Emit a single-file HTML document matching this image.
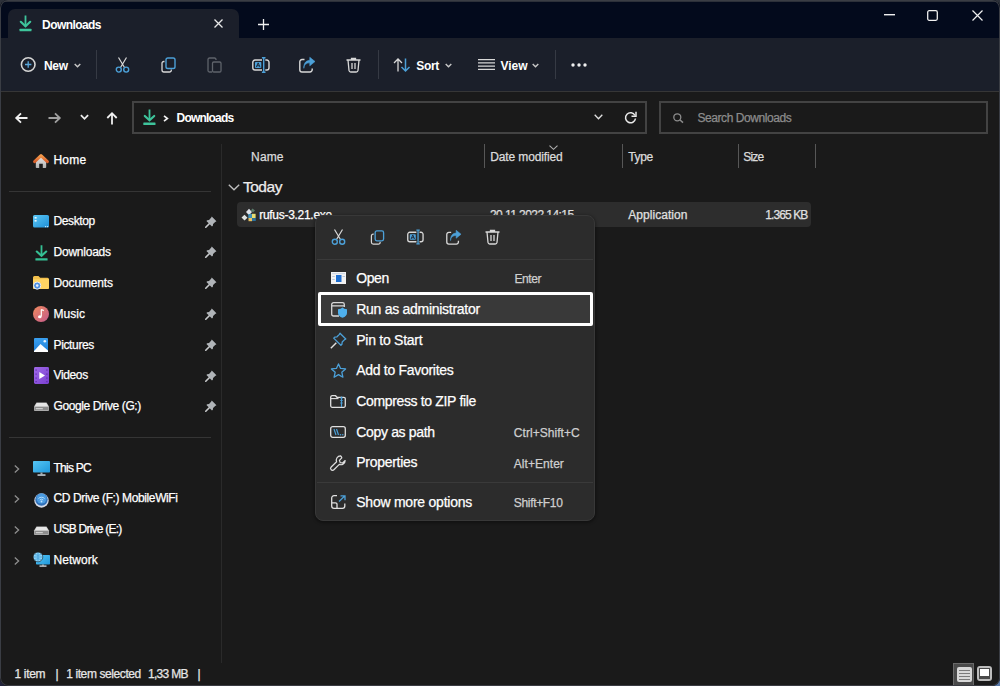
<!DOCTYPE html>
<html><head><meta charset="utf-8">
<style>
html,body{margin:0;padding:0;}
body{width:1000px;height:686px;overflow:hidden;background:#2c3039;position:relative;font-family:"Liberation Sans",sans-serif;}
.win{position:absolute;left:0;top:0;width:1000px;height:686px;border-radius:8px;background:#1a1a1a;overflow:hidden;}
.abs{position:absolute;}
.t{position:absolute;line-height:1;white-space:nowrap;font-family:"Liberation Sans",sans-serif;-webkit-text-stroke:0.25px currentColor;}
svg{position:absolute;overflow:visible;}
</style></head><body>
<div class="abs" style="left:0;top:646px;width:40px;height:40px;background:#22233a;"></div>
<div class="abs" style="left:960px;top:646px;width:40px;height:40px;background:#5878a8;"></div>
<div class="win">
  <!-- title bar -->
  <div class="abs" style="left:0;top:0;width:1000px;height:38px;background:#030a1c;"></div>
  <div class="abs" style="left:0;top:0;width:1000px;height:2px;background:#2c3039;"></div>
  <!-- tab -->
  <div class="abs" style="left:8px;top:9px;width:231px;height:29px;background:#1b1f2a;border-radius:7px 7px 0 0;"></div>
  <!-- toolbar -->
  <div class="abs" style="left:0;top:38px;width:1000px;height:53px;background:#1b1f2a;"></div>
  <div class="abs" style="left:0;top:91px;width:1000px;height:1px;background:#363636;"></div>
  <!-- address & search boxes -->
  <div class="abs" style="left:132px;top:101px;width:511px;height:29px;border:2px solid #434343;background:#1a1a1a;"></div>
  <div class="abs" style="left:659px;top:101px;width:325px;height:29px;border:2px solid #434343;background:#1a1a1a;"></div>
  <!-- nav separators -->
  <div class="abs" style="left:9px;top:191px;width:202px;height:1px;background:#353535;"></div>
  <div class="abs" style="left:9px;top:437px;width:202px;height:1px;background:#353535;"></div>
  <!-- splitter -->
  <div class="abs" style="left:221px;top:144px;width:1px;height:519px;background:#2a2a2a;"></div>
  <!-- column separators -->
  <div class="abs" style="left:484px;top:144px;width:1px;height:24px;background:#575757;"></div>
  <div class="abs" style="left:622px;top:144px;width:1px;height:24px;background:#575757;"></div>
  <div class="abs" style="left:738px;top:144px;width:1px;height:24px;background:#575757;"></div>
  <div class="abs" style="left:815px;top:144px;width:1px;height:24px;background:#575757;"></div>
  <!-- selected row -->
  <div class="abs" style="left:237px;top:202px;width:574px;height:25px;background:#2d2d2d;border-radius:4px;"></div>
  <!-- toolbar separators -->
  <div class="abs" style="left:96px;top:50px;width:1px;height:29px;background:#363a44;"></div>
  <div class="abs" style="left:378px;top:50px;width:1px;height:29px;background:#363a44;"></div>
  <div class="abs" style="left:555px;top:50px;width:1px;height:29px;background:#363a44;"></div>

  <!-- view buttons -->
  <div class="abs" style="left:953px;top:663px;width:21px;height:23px;background:#4a4a4a;border:1px solid #6a6a6a;box-sizing:border-box;"></div>
  <div class="abs" style="left:957px;top:667px;width:15px;height:15px;background:#d8d8d8;border-radius:2px;"></div>
  <div class="abs" style="left:959px;top:670px;width:11px;height:1px;background:#7a7a7a;"></div><div class="abs" style="left:959px;top:673px;width:11px;height:1px;background:#7a7a7a;"></div><div class="abs" style="left:959px;top:676px;width:11px;height:1px;background:#7a7a7a;"></div><div class="abs" style="left:959px;top:679px;width:11px;height:1px;background:#7a7a7a;"></div>
  <div class="abs" style="left:977px;top:666px;width:15px;height:15px;border:2px solid #bdbdbd;box-sizing:border-box;border-radius:3px;"></div>
  <div class="abs" style="left:979px;top:668px;width:11px;height:11px;background:#4a4a4a;"></div><div class="abs" style="left:980px;top:669px;width:9px;height:7px;background:#ffffff;"></div>

  <!-- context menu -->
  <div class="abs" style="left:315px;top:215px;width:280px;height:306px;background:#2c2c2c;border:1px solid #383838;box-sizing:border-box;border-radius:8px;box-shadow:0 1px 3px 1px rgba(0,0,0,0.35);z-index:10;"></div>
  <div class="abs" style="left:317px;top:259px;width:276px;height:1px;background:#3a3a3a;z-index:11;"></div>
  <div class="abs" style="left:317px;top:482px;width:276px;height:1px;background:#3a3a3a;z-index:11;"></div>
  <div class="abs" style="left:318px;top:292px;width:275px;height:34px;background:#393939;border:3px solid #ffffff;box-sizing:border-box;border-radius:2px;z-index:11;"></div>

<!-- tab download icon -->
<svg style="left:18.5px;top:15px" width="13" height="17" viewBox="0 0 13 17"><path d="M6.5 0.5V11.5" stroke="#3ec49b" stroke-width="1.8" fill="none"/><path d="M1.8 6.8L6.5 11.3L11.2 6.8" stroke="#3ec49b" stroke-width="2.2" fill="none" stroke-linecap="round"/><rect x="0.5" y="13.8" width="12" height="2.4" rx="0.5" fill="#3ec49b"/></svg>
<!-- tab close -->
<svg style="left:214px;top:18.5px" width="9" height="9" viewBox="0 0 9 9"><path d="M0.5 0.5L8.5 8.5M8.5 0.5L0.5 8.5" stroke="#e8e8e8" stroke-width="1.3"/></svg>
<!-- plus -->
<svg style="left:257.5px;top:18.5px" width="11" height="11" viewBox="0 0 11 11"><path d="M5.5 0V11M0 5.5H11" stroke="#f0f0f0" stroke-width="1.3"/></svg>
<!-- window controls -->
<svg style="left:884px;top:14px" width="11" height="2" viewBox="0 0 11 2"><rect x="0" y="0" width="11" height="1.4" fill="#f0f0f0"/></svg>
<svg style="left:927px;top:9.5px" width="11" height="11" viewBox="0 0 11 11"><rect x="0.7" y="0.7" width="9.6" height="9.6" rx="1.5" stroke="#f0f0f0" stroke-width="1.3" fill="none"/></svg>
<svg style="left:971.5px;top:9.5px" width="11" height="11" viewBox="0 0 11 11"><path d="M0.5 0.5L10.5 10.5M10.5 0.5L0.5 10.5" stroke="#f0f0f0" stroke-width="1.2"/></svg>
<!-- New circle plus -->
<svg style="left:20px;top:57px" width="16" height="16" viewBox="0 0 16 16"><circle cx="8.2" cy="7.5" r="6.8" stroke="#d4d4d4" stroke-width="1.6" fill="none"/><path d="M8.2 4.3V10.7M5 7.5H11.4" stroke="#5aa8dc" stroke-width="1.3"/></svg>
<svg style="left:74px;top:63px" width="7" height="5" viewBox="0 0 7 5"><path d="M0.7 1L3.5 3.8L6.3 1" stroke="#c8c8c8" stroke-width="1.4" fill="none"/></svg>
<!-- cut -->
<svg style="left:115px;top:57px" width="15" height="16" viewBox="0 0 15 16"><path d="M3.5 0.5L9.5 10.5M11.5 0.5L5.5 10.5" stroke="#d8d8d8" stroke-width="1.2" fill="none"/><circle cx="3.8" cy="12.6" r="2.5" stroke="#4ca0d8" stroke-width="1.4" fill="none"/><circle cx="11.2" cy="12.6" r="2.5" stroke="#4ca0d8" stroke-width="1.4" fill="none"/></svg>
<!-- copy -->
<svg style="left:161px;top:57px" width="15" height="16" viewBox="0 0 15 16"><path d="M3.5 4.5H2.8A1.8 1.8 0 0 0 1 6.3V13A2 2 0 0 0 3 15H8.5A1.8 1.8 0 0 0 10.3 13.2V12.5" stroke="#d8d8d8" stroke-width="1.3" fill="none"/><rect x="5" y="1" width="9" height="10.5" rx="1.8" stroke="#4ca0d8" stroke-width="1.4" fill="none"/></svg>
<!-- paste disabled -->
<svg style="left:207px;top:57px" width="15" height="16" viewBox="0 0 15 16"><path d="M9 3V2.5A1.5 1.5 0 0 0 7.5 1H2.5A1.5 1.5 0 0 0 1 2.5V13.5A1.5 1.5 0 0 0 2.5 15H5" stroke="#5f636b" stroke-width="1.3" fill="none"/><rect x="5.5" y="5" width="8.5" height="10" rx="1.3" stroke="#5f636b" stroke-width="1.3" fill="none"/></svg>
<!-- rename -->
<svg style="left:252px;top:57px" width="18" height="16" viewBox="0 0 18 16"><path d="M10 3H3A2.2 2.2 0 0 0 0.8 5.2V10.8A2.2 2.2 0 0 0 3 13H10M13.3 3H14.8A2.2 2.2 0 0 1 17 5.2V10.8A2.2 2.2 0 0 1 14.8 13H13.3" stroke="#d8d8d8" stroke-width="1.4" fill="none"/><path d="M11.7 0.8V15.2M9.9 0.8H13.5M9.9 15.2H13.5" stroke="#4ca0d8" stroke-width="1.4"/><rect x="3" y="5" width="6.3" height="6" rx="0.8" fill="#4ca0d8"/><path d="M4.3 10.2L6.15 5.8L8 10.2M4.9 8.8H7.4" stroke="#1c1f29" stroke-width="0.9" fill="none"/></svg>
<!-- share -->
<svg style="left:299px;top:57px" width="17" height="16" viewBox="0 0 17 16"><path d="M5.5 2.5H3A2.2 2.2 0 0 0 0.8 4.7V12.8A2.2 2.2 0 0 0 3 15H11A2.2 2.2 0 0 0 13.2 12.8V11.5" stroke="#d8d8d8" stroke-width="1.4" fill="none"/><path d="M4.8 11.3C5 7.5 7.5 5.8 10.8 5.8V8.8L16 4.5L10.8 0.3V3.3C6.8 3.5 4.6 6.5 4.8 11.3Z" fill="#4ca0d8" stroke="#4ca0d8" stroke-width="0.6" stroke-linejoin="round"/></svg>
<!-- delete -->
<svg style="left:345.5px;top:57px" width="15" height="16" viewBox="0 0 15 16"><path d="M0.5 3H14.5M5.5 3V1.5H9.5V3M2 3L3 13.5A1.8 1.8 0 0 0 4.8 15H10.2A1.8 1.8 0 0 0 12 13.5L13 3M6 6V12M9 6V12" stroke="#d8d8d8" stroke-width="1.3" fill="none"/></svg>
<!-- sort -->
<svg style="left:393px;top:58px" width="18" height="14" viewBox="0 0 18 14"><path d="M5 13.5V1M1 5L5 1L9 5" stroke="#d8d8d8" stroke-width="1.3" fill="none"/><path d="M12.5 0.5V13M8.5 9L12.5 13L16.5 9" stroke="#4ca0d8" stroke-width="1.5" fill="none"/></svg>
<svg style="left:445px;top:63px" width="7" height="5" viewBox="0 0 7 5"><path d="M0.7 1L3.5 3.8L6.3 1" stroke="#c8c8c8" stroke-width="1.4" fill="none"/></svg>
<!-- view -->
<svg style="left:478px;top:59px" width="17" height="12" viewBox="0 0 17 12"><path d="M0 0.7H17M0 3.9H17M0 7.1H17M0 10.3H17" stroke="#d8d8d8" stroke-width="1.2"/></svg>
<svg style="left:532px;top:63px" width="7" height="5" viewBox="0 0 7 5"><path d="M0.7 1L3.5 3.8L6.3 1" stroke="#c8c8c8" stroke-width="1.4" fill="none"/></svg>
<!-- more -->
<svg style="left:571px;top:63px" width="16" height="4" viewBox="0 0 16 4"><circle cx="2" cy="2" r="1.7" fill="#f0f0f0"/><circle cx="8" cy="2" r="1.7" fill="#f0f0f0"/><circle cx="14" cy="2" r="1.7" fill="#f0f0f0"/></svg>
<!-- nav arrows -->
<svg style="left:14.5px;top:112px" width="13" height="12" viewBox="0 0 13 12"><path d="M12.5 6H1.5M6 1.3L1.2 6L6 10.7" stroke="#f0f0f0" stroke-width="1.8" fill="none"/></svg>
<svg style="left:48px;top:112px" width="13" height="12" viewBox="0 0 13 12"><path d="M0.5 6H11.5M7 1.3L11.8 6L7 10.7" stroke="#a0a0a0" stroke-width="1.8" fill="none"/></svg>
<svg style="left:79.5px;top:114px" width="9" height="7" viewBox="0 0 9 7"><path d="M0.9 1.2L4.5 4.8L8.1 1.2" stroke="#ececec" stroke-width="1.8" fill="none"/></svg>
<svg style="left:106px;top:111.5px" width="12" height="13" viewBox="0 0 12 13"><path d="M6 12.5V1.5M1.3 6L6 1.2L10.7 6" stroke="#f0f0f0" stroke-width="1.8" fill="none"/></svg>
<!-- address download icon -->
<svg style="left:142.5px;top:108.5px" width="13" height="17" viewBox="0 0 13 17"><path d="M6.5 0.5V11.3" stroke="#3ec49b" stroke-width="1.8" fill="none"/><path d="M1.8 7L6.5 11.3L11.2 7" stroke="#3ec49b" stroke-width="2.2" fill="none" stroke-linecap="round"/><rect x="0.3" y="13.5" width="12.2" height="2.4" rx="0.5" fill="#3ec49b"/></svg>
<svg style="left:163px;top:115px" width="6" height="7" viewBox="0 0 6 7"><path d="M1 0.8L4.4 3.5L1 6.2" stroke="#f0f0f0" stroke-width="1.7" fill="none"/></svg>
<svg style="left:594px;top:114px" width="9" height="6" viewBox="0 0 9 6"><path d="M0.7 0.7L4.5 4.7L8.3 0.7" stroke="#e0e0e0" stroke-width="1.3" fill="none"/></svg>
<!-- refresh -->
<svg style="left:624px;top:110.5px" width="13" height="13" viewBox="0 0 13 13"><path d="M11 4.5A5 5 0 1 0 11.5 7.5" stroke="#e8e8e8" stroke-width="1.5" fill="none"/><path d="M12 0.8V5.3H7.5" stroke="#e8e8e8" stroke-width="1.5" fill="none"/></svg>
<!-- search -->
<svg style="left:673px;top:113px" width="11" height="10" viewBox="0 0 11 10"><circle cx="4.3" cy="4.3" r="3.5" stroke="#8c8c8c" stroke-width="1.3" fill="none"/><path d="M6.8 6.8L10 9.6" stroke="#8c8c8c" stroke-width="1.5"/></svg>
<!-- ===== NAV ICONS ===== -->
<!-- home -->
<svg style="left:33px;top:152.5px" width="16" height="16" viewBox="0 0 16 16"><defs><linearGradient id="roof" x1="0" y1="0" x2="0" y2="1"><stop offset="0" stop-color="#f59a4a"/><stop offset="1" stop-color="#d8602c"/></linearGradient><linearGradient id="hbody" x1="0" y1="0" x2="0" y2="1"><stop offset="0" stop-color="#e8e8e8"/><stop offset="1" stop-color="#b0b0b0"/></linearGradient></defs><path d="M2.8 7.5L8 3.2L13.2 7.5V14.3A0.8 0.8 0 0 1 12.4 15.1H9.8V10.8H6.2V15.1H3.6A0.8 0.8 0 0 1 2.8 14.3Z" fill="url(#hbody)"/><path d="M1.6 8.6L8 2.6L14.4 8.6" stroke="url(#roof)" stroke-width="3" fill="none" stroke-linejoin="round" stroke-linecap="round"/></svg>
<!-- desktop -->
<svg style="left:33px;top:215px" width="16" height="13" viewBox="0 0 16 13"><defs><linearGradient id="dsk" x1="0" y1="0" x2="1" y2="1"><stop offset="0" stop-color="#5cc8f5"/><stop offset="1" stop-color="#1e8fd8"/></linearGradient></defs><rect x="0" y="0" width="16" height="12.6" rx="1.6" fill="url(#dsk)"/><rect x="1.6" y="2" width="2" height="1.6" fill="#e8f6ff"/><rect x="1.6" y="5" width="2" height="1.6" fill="#e8f6ff"/><rect x="12" y="11" width="1.2" height="1.2" fill="#bfe6ff"/><rect x="14" y="11" width="1.2" height="1.2" fill="#bfe6ff"/></svg>
<!-- downloads -->
<svg style="left:35px;top:244.5px" width="13" height="16" viewBox="0 0 13 16"><path d="M6.5 0.3V10.8" stroke="#35c094" stroke-width="1.8" fill="none"/><path d="M1.8 6.5L6.5 10.8L11.2 6.5" stroke="#35c094" stroke-width="2.1" fill="none" stroke-linecap="round"/><rect x="0.4" y="13.3" width="12.2" height="2.3" rx="0.5" fill="#35c094"/></svg>
<!-- documents -->
<svg style="left:33px;top:276px" width="16" height="14" viewBox="0 0 16 14"><path d="M0 1.5A1.5 1.5 0 0 1 1.5 0H5.5L7.2 1.8H14.5A1.5 1.5 0 0 1 16 3.3V11.5A1.5 1.5 0 0 1 14.5 13H1.5A1.5 1.5 0 0 1 0 11.5Z" fill="#f3c04c"/><path d="M0 3.3H16V11.5A1.5 1.5 0 0 1 14.5 13H1.5A1.5 1.5 0 0 1 0 11.5Z" fill="#ffd463"/><circle cx="4.2" cy="9.6" r="3.6" fill="#4d8fe0" stroke="#e8eef8" stroke-width="1"/><circle cx="4.2" cy="9.6" r="1.3" fill="#e8eef8"/></svg>
<!-- music -->
<svg style="left:33px;top:305.5px" width="16" height="16" viewBox="0 0 16 16"><defs><linearGradient id="mus" x1="0" y1="0" x2="1" y2="1"><stop offset="0" stop-color="#f08a5d"/><stop offset="1" stop-color="#c45a8c"/></linearGradient></defs><circle cx="8" cy="8" r="8" fill="url(#mus)"/><path d="M8.3 3.5V10.5" stroke="#ffffff" stroke-width="1.2"/><path d="M8.3 3.5L10.8 4.6" stroke="#ffffff" stroke-width="1.3"/><ellipse cx="6.8" cy="10.8" rx="1.8" ry="1.5" fill="#ffffff"/></svg>
<!-- pictures -->
<svg style="left:34px;top:337.5px" width="14" height="14" viewBox="0 0 14 14"><defs><linearGradient id="pic" x1="0" y1="0" x2="0" y2="1"><stop offset="0" stop-color="#3aa0f0"/><stop offset="1" stop-color="#1f7fd8"/></linearGradient></defs><rect x="0" y="0" width="14" height="14" rx="1" fill="url(#pic)"/><path d="M0 13L6.5 6L14 12.5V14H0Z" fill="#ffffff"/><circle cx="10.8" cy="3.2" r="1.3" fill="#e6f3ff"/></svg>
<!-- videos -->
<svg style="left:34px;top:367px" width="15" height="17" viewBox="0 0 15 17"><defs><linearGradient id="vid" x1="0" y1="0" x2="1" y2="1"><stop offset="0" stop-color="#a06ae8"/><stop offset="1" stop-color="#7a3fd0"/></linearGradient></defs><rect x="0" y="0" width="15" height="17" rx="1.4" fill="url(#vid)"/><path d="M5.3 5V12L11 8.5Z" fill="#ffffff"/><rect x="1.5" y="2.5" width="1.2" height="1.2" fill="#5c2aa8"/><rect x="1.5" y="6.5" width="1.2" height="1.2" fill="#5c2aa8"/><rect x="1.5" y="10.5" width="1.2" height="1.2" fill="#5c2aa8"/><rect x="1.5" y="14" width="1.2" height="1.2" fill="#5c2aa8"/><rect x="12.3" y="2.5" width="1.2" height="1.2" fill="#5c2aa8"/><rect x="12.3" y="6.5" width="1.2" height="1.2" fill="#5c2aa8"/><rect x="12.3" y="10.5" width="1.2" height="1.2" fill="#5c2aa8"/><rect x="12.3" y="14" width="1.2" height="1.2" fill="#5c2aa8"/></svg>
<!-- google drive -->
<svg style="left:34px;top:401.5px" width="15" height="9" viewBox="0 0 15 9"><path d="M2.5 0.5H12.5L15 4.5V8A1 1 0 0 1 14 9H1A1 1 0 0 1 0 8V4.5Z" fill="#b8b8b8"/><path d="M2.8 1H12.2L14.2 4.3H0.8Z" fill="#e6e6e6"/><rect x="0.5" y="5" width="14" height="3.3" fill="#8c8c8c"/><rect x="1.8" y="6.2" width="7" height="1" fill="#dcdcdc"/></svg>
<!-- pins -->
<svg style="left:205px;top:215.5px" width="12" height="12" viewBox="0 0 11 11"><path d="M6.2 0.5L10.5 4.8L9.3 5.4L7.4 7.3L7.2 9L6.4 9.7L1.3 4.6L2 3.8L3.7 3.6L5.6 1.7Z" fill="#b0b4b8"/><path d="M3.9 7.1L0.7 10.3" stroke="#c8cacc" stroke-width="1.5" stroke-linecap="round"/></svg>
<svg style="left:205px;top:246.3px" width="12" height="12" viewBox="0 0 11 11"><path d="M6.2 0.5L10.5 4.8L9.3 5.4L7.4 7.3L7.2 9L6.4 9.7L1.3 4.6L2 3.8L3.7 3.6L5.6 1.7Z" fill="#b0b4b8"/><path d="M3.9 7.1L0.7 10.3" stroke="#c8cacc" stroke-width="1.5" stroke-linecap="round"/></svg>
<svg style="left:205px;top:277.1px" width="12" height="12" viewBox="0 0 11 11"><path d="M6.2 0.5L10.5 4.8L9.3 5.4L7.4 7.3L7.2 9L6.4 9.7L1.3 4.6L2 3.8L3.7 3.6L5.6 1.7Z" fill="#b0b4b8"/><path d="M3.9 7.1L0.7 10.3" stroke="#c8cacc" stroke-width="1.5" stroke-linecap="round"/></svg>
<svg style="left:205px;top:307.9px" width="12" height="12" viewBox="0 0 11 11"><path d="M6.2 0.5L10.5 4.8L9.3 5.4L7.4 7.3L7.2 9L6.4 9.7L1.3 4.6L2 3.8L3.7 3.6L5.6 1.7Z" fill="#b0b4b8"/><path d="M3.9 7.1L0.7 10.3" stroke="#c8cacc" stroke-width="1.5" stroke-linecap="round"/></svg>
<svg style="left:205px;top:338.7px" width="12" height="12" viewBox="0 0 11 11"><path d="M6.2 0.5L10.5 4.8L9.3 5.4L7.4 7.3L7.2 9L6.4 9.7L1.3 4.6L2 3.8L3.7 3.6L5.6 1.7Z" fill="#b0b4b8"/><path d="M3.9 7.1L0.7 10.3" stroke="#c8cacc" stroke-width="1.5" stroke-linecap="round"/></svg>
<svg style="left:205px;top:369.5px" width="12" height="12" viewBox="0 0 11 11"><path d="M6.2 0.5L10.5 4.8L9.3 5.4L7.4 7.3L7.2 9L6.4 9.7L1.3 4.6L2 3.8L3.7 3.6L5.6 1.7Z" fill="#b0b4b8"/><path d="M3.9 7.1L0.7 10.3" stroke="#c8cacc" stroke-width="1.5" stroke-linecap="round"/></svg>
<svg style="left:205px;top:400.3px" width="12" height="12" viewBox="0 0 11 11"><path d="M6.2 0.5L10.5 4.8L9.3 5.4L7.4 7.3L7.2 9L6.4 9.7L1.3 4.6L2 3.8L3.7 3.6L5.6 1.7Z" fill="#b0b4b8"/><path d="M3.9 7.1L0.7 10.3" stroke="#c8cacc" stroke-width="1.5" stroke-linecap="round"/></svg>
<!-- chevrons nav -->
<svg style="left:14px;top:464.5px" width="6" height="8" viewBox="0 0 6 8"><path d="M0.8 0.6L4.6 4L0.8 7.4" stroke="#8e8e8e" stroke-width="1.3" fill="none"/></svg>
<svg style="left:14px;top:495.3px" width="6" height="8" viewBox="0 0 6 8"><path d="M0.8 0.6L4.6 4L0.8 7.4" stroke="#8e8e8e" stroke-width="1.3" fill="none"/></svg>
<svg style="left:14px;top:526.1px" width="6" height="8" viewBox="0 0 6 8"><path d="M0.8 0.6L4.6 4L0.8 7.4" stroke="#8e8e8e" stroke-width="1.3" fill="none"/></svg>
<svg style="left:14px;top:556.9px" width="6" height="8" viewBox="0 0 6 8"><path d="M0.8 0.6L4.6 4L0.8 7.4" stroke="#8e8e8e" stroke-width="1.3" fill="none"/></svg>
<!-- this pc -->
<svg style="left:32.5px;top:461px" width="17" height="15" viewBox="0 0 17 15"><defs><linearGradient id="pc" x1="0" y1="0" x2="1" y2="1"><stop offset="0" stop-color="#56c6f4"/><stop offset="1" stop-color="#1f98dc"/></linearGradient></defs><rect x="0" y="0" width="17" height="11.5" rx="0.8" fill="url(#pc)"/><rect x="7.5" y="11.5" width="2" height="2" fill="#9aa7b0"/><rect x="4.5" y="13.3" width="8" height="1.5" fill="#c9d3da"/></svg>
<!-- cd drive -->
<svg style="left:33.5px;top:492.5px" width="15" height="15" viewBox="0 0 15 15"><circle cx="7.5" cy="7.5" r="7.2" fill="#d6dbe6"/><circle cx="7.5" cy="6.6" r="6.2" fill="#2f6fb8"/><circle cx="7.5" cy="5.6" r="5" fill="#4a9be0"/><path d="M4.5 5.5A4.2 4.2 0 0 1 10.5 5.5M5.8 7A2.4 2.4 0 0 1 9.2 7" stroke="#bfe3ff" stroke-width="0.9" fill="none"/><circle cx="7.5" cy="8.5" r="0.9" fill="#bfe3ff"/></svg>
<!-- usb drive -->
<svg style="left:34px;top:525.5px" width="15" height="9" viewBox="0 0 15 9"><path d="M2.5 0.5H12.5L15 4.5V8A1 1 0 0 1 14 9H1A1 1 0 0 1 0 8V4.5Z" fill="#b8b8b8"/><path d="M2.8 1H12.2L14.2 4.3H0.8Z" fill="#e6e6e6"/><rect x="0.5" y="5" width="14" height="3.3" fill="#8c8c8c"/><rect x="1.8" y="6.2" width="7" height="1" fill="#dcdcdc"/></svg>
<!-- network -->
<svg style="left:32.5px;top:552px" width="17" height="15" viewBox="0 0 17 15"><defs><linearGradient id="net" x1="0" y1="0" x2="1" y2="1"><stop offset="0" stop-color="#56c6f4"/><stop offset="1" stop-color="#1f98dc"/></linearGradient></defs><rect x="3" y="3" width="14" height="9.5" rx="0.8" fill="url(#net)"/><rect x="9" y="12.5" width="2" height="1.2" fill="#9aa7b0"/><rect x="6.5" y="13.4" width="7" height="1.4" fill="#c9d3da"/><circle cx="5" cy="5" r="4.8" fill="#8fd6f8" stroke="#1b1b1b" stroke-width="0.6"/><path d="M0.5 5H9.5M5 0.3V9.7M1.5 2.5Q5 4 8.5 2.5M1.5 7.5Q5 6 8.5 7.5" stroke="#2a8ccc" stroke-width="0.6" fill="none"/></svg>
<!-- today chevron -->
<svg style="left:228px;top:183.5px" width="12" height="7" viewBox="0 0 12 7"><path d="M0.8 0.8L6 5.8L11.2 0.8" stroke="#bdbdbd" stroke-width="1.4" fill="none"/></svg>
<!-- sort chevron over date modified -->
<svg style="left:549px;top:145px" width="9" height="5" viewBox="0 0 9 5"><path d="M0.5 0.6L4.5 4.3L8.5 0.6" stroke="#b0b0b0" stroke-width="1.1" fill="none"/></svg>
<!-- rufus icon -->
<svg style="left:240px;top:207px" width="17" height="15" viewBox="0 0 17 15"><path d="M6 5L9 1.8L12 5L9 8.2Z" fill="#dfe2ea"/><path d="M1.5 10.5L4.5 7.8L7.5 10.8L4.5 13.5Z" fill="#dfe2e0"/><path d="M12.5 1.5L15 3.5L13 5.5L10.8 3.5Z" fill="#5a7a6a"/><rect x="8.3" y="7" width="3.8" height="4.3" fill="#3f8fb8"/><rect x="12" y="6.8" width="3.6" height="4.2" fill="#e6dc70"/><rect x="8.5" y="11" width="3.6" height="3.2" fill="#e8c060"/><rect x="12" y="11" width="3.8" height="3" fill="#2a6f9a"/></svg>
<!-- ===== MENU ICONS (z 20) ===== -->
<div style="position:absolute;left:0;top:0;width:1000px;height:686px;z-index:20;pointer-events:none">
<!-- cut -->
<svg style="left:331px;top:229px" width="15" height="16" viewBox="0 0 15 16"><path d="M3.5 0.5L9.5 10.5M11.5 0.5L5.5 10.5" stroke="#d8d8d8" stroke-width="1.2" fill="none"/><circle cx="3.8" cy="12.8" r="2.5" stroke="#4ca0d8" stroke-width="1.4" fill="none"/><circle cx="11.2" cy="12.8" r="2.5" stroke="#4ca0d8" stroke-width="1.4" fill="none"/></svg>
<!-- copy -->
<svg style="left:369.5px;top:229.5px" width="15" height="15" viewBox="0 0 15 16"><path d="M3.5 4.5H2.8A1.8 1.8 0 0 0 1 6.3V13A2 2 0 0 0 3 15H8.5A1.8 1.8 0 0 0 10.3 13.2V12.5" stroke="#d8d8d8" stroke-width="1.3" fill="none"/><rect x="5" y="1" width="9" height="10.5" rx="1.8" stroke="#4ca0d8" stroke-width="1.4" fill="none"/></svg>
<!-- rename -->
<svg style="left:406.5px;top:229px" width="17" height="16" viewBox="0 0 18 16"><path d="M10 3H3A2.2 2.2 0 0 0 0.8 5.2V10.8A2.2 2.2 0 0 0 3 13H10M13.3 3H14.8A2.2 2.2 0 0 1 17 5.2V10.8A2.2 2.2 0 0 1 14.8 13H13.3" stroke="#d8d8d8" stroke-width="1.4" fill="none"/><path d="M11.7 0.8V15.2M9.9 0.8H13.5M9.9 15.2H13.5" stroke="#4ca0d8" stroke-width="1.4"/><rect x="3" y="5" width="6.3" height="6" rx="0.8" fill="#4ca0d8"/><path d="M4.3 10.2L6.15 5.8L8 10.2M4.9 8.8H7.4" stroke="#1c1f29" stroke-width="0.9" fill="none"/></svg>
<!-- share -->
<svg style="left:446px;top:229.5px" width="16" height="15" viewBox="0 0 17 16"><path d="M5.5 2.5H3A2.2 2.2 0 0 0 0.8 4.7V12.8A2.2 2.2 0 0 0 3 15H11A2.2 2.2 0 0 0 13.2 12.8V11.5" stroke="#d8d8d8" stroke-width="1.4" fill="none"/><path d="M4.8 11.3C5 7.5 7.5 5.8 10.8 5.8V8.8L16 4.5L10.8 0.3V3.3C6.8 3.5 4.6 6.5 4.8 11.3Z" fill="#4ca0d8" stroke="#4ca0d8" stroke-width="0.6" stroke-linejoin="round"/></svg>
<!-- delete -->
<svg style="left:484.5px;top:229px" width="15" height="16" viewBox="0 0 15 16"><path d="M0.5 3H14.5M5.5 3V1.5H9.5V3M2 3L3 13.5A1.8 1.8 0 0 0 4.8 15H10.2A1.8 1.8 0 0 0 12 13.5L13 3M6 6V12M9 6V12" stroke="#d8d8d8" stroke-width="1.3" fill="none"/></svg>
<!-- open -->
<svg style="left:330.5px;top:272px" width="15" height="12" viewBox="0 0 15 12"><rect x="0" y="0" width="15" height="12" fill="#f2f2f2"/><rect x="5" y="3" width="5.5" height="7" fill="#1f6fd0"/><rect x="1" y="1" width="13" height="1.2" fill="#cfd8e6"/><rect x="1.3" y="4" width="2.5" height="1" fill="#b8c6da"/><rect x="1.3" y="7" width="2.5" height="1" fill="#b8c6da"/><rect x="11.5" y="4" width="2.5" height="1" fill="#b8c6da"/></svg>
<!-- run as admin -->
<svg style="left:331px;top:302px" width="16" height="16" viewBox="0 0 16 16"><path d="M8 14H2.5A1.8 1.8 0 0 1 0.7 12.2V2.5A1.8 1.8 0 0 1 2.5 0.7H11.5A1.8 1.8 0 0 1 13.3 2.5V5M0.7 3.8H13.3" stroke="#d8d8d8" stroke-width="1.3" fill="none"/><path d="M7 7.3Q10 7 11.5 5.5Q13 7 16 7.3V11Q16 14.3 11.5 15.8Q7 14.3 7 11Z" fill="#4fb0ec"/></svg>
<!-- pin to start -->
<svg style="left:330px;top:331.5px" width="17" height="17" viewBox="0 0 17 17"><path d="M10 1.2L15.8 7L14.6 7.6L12.2 10L11.9 12.3L10.9 13.3L3.7 6.1L4.7 5.1L7 4.8L9.4 2.4Z" stroke="#4ca0d8" stroke-width="1.3" fill="none" stroke-linejoin="round"/><path d="M6.3 10.7L0.8 16.2" stroke="#e0e0e0" stroke-width="1.4"/></svg>
<!-- star -->
<svg style="left:330px;top:363px" width="17" height="16" viewBox="0 0 17 16"><path d="M8.5 0.9L10.6 5.4L15.6 5.9L11.8 9.2L12.9 14.2L8.5 11.6L4.1 14.2L5.2 9.2L1.4 5.9L6.4 5.4Z" stroke="#4ca0d8" stroke-width="1.3" fill="none" stroke-linejoin="round"/></svg>
<!-- compress -->
<svg style="left:330px;top:395px" width="16" height="13" viewBox="0 0 16 13"><path d="M0.7 2A1.5 1.5 0 0 1 2.2 0.7H5.5L7 2.3H13.8A1.5 1.5 0 0 1 15.3 3.8V10.8A1.5 1.5 0 0 1 13.8 12.3H2.2A1.5 1.5 0 0 1 0.7 10.8Z" stroke="#e0e0e0" stroke-width="1.3" fill="none"/><path d="M0.7 3.6H8.5" stroke="#e0e0e0" stroke-width="1.1"/><path d="M11.5 1.5V12M10.3 3H12.7M10.3 5.5H12.7M10.3 8H12.7" stroke="#4ca0d8" stroke-width="1.2"/></svg>
<!-- copy as path -->
<svg style="left:330px;top:426px" width="16" height="12" viewBox="0 0 16 12"><rect x="0.7" y="0.7" width="14.6" height="10.6" rx="2" stroke="#e0e0e0" stroke-width="1.3" fill="none"/><path d="M4 3L6 9M6.5 3L8.5 9" stroke="#4ca0d8" stroke-width="1.2"/><circle cx="10.5" cy="8.8" r="0.8" fill="#4ca0d8"/><circle cx="12.8" cy="8.8" r="0.8" fill="#4ca0d8"/></svg>
<!-- wrench -->
<svg style="left:330px;top:455px" width="16" height="16" viewBox="0 0 16 16"><path d="M10.5 0.8A4.3 4.3 0 0 0 6.6 6.7L1.2 12A1.8 1.8 0 0 0 3.9 14.8L9.3 9.4A4.3 4.3 0 0 0 15.2 5.5L12.6 8L10.2 7.6L9.4 5.3L11.8 2.8A4.4 4.4 0 0 0 10.5 0.8Z" stroke="#e0e0e0" stroke-width="1.2" fill="none" stroke-linejoin="round"/></svg>
<!-- show more -->
<svg style="left:331px;top:495px" width="15" height="14" viewBox="0 0 15 14"><path d="M6 0.7H3A2.3 2.3 0 0 0 0.7 3V11A2.3 2.3 0 0 0 3 13.3H11.5A2.3 2.3 0 0 0 13.8 11V8.5M0.7 7.8H4.5A1.5 1.5 0 0 1 6 9.3V13.3" stroke="#e0e0e0" stroke-width="1.3" fill="none"/><path d="M8 6.5L14 0.8M9.5 0.8H14V5.3" stroke="#4ca0d8" stroke-width="1.3" fill="none"/></svg>
</div>

<div class="t" style="top:18.64px;font-size:12px;color:#ffffff;font-weight:700;-webkit-text-stroke:0;letter-spacing:-0.582px;left:42.12px;">Downloads</div>
<div class="t" style="top:60.04px;font-size:12px;color:#ffffff;font-weight:700;-webkit-text-stroke:0;letter-spacing:-0.264px;left:43.92px;">New</div>
<div class="t" style="top:60.24px;font-size:12px;color:#ffffff;font-weight:700;-webkit-text-stroke:0;letter-spacing:-0.313px;left:416.22px;">Sort</div>
<div class="t" style="top:60.24px;font-size:12px;color:#ffffff;font-weight:700;-webkit-text-stroke:0;letter-spacing:-0.060px;left:500.52px;">View</div>
<div class="t" style="top:112.04px;font-size:12px;color:#ffffff;font-weight:700;-webkit-text-stroke:0;letter-spacing:-0.788px;left:176.52px;">Downloads</div>
<div class="t" style="top:112.04px;font-size:12px;color:#8c8c8c;letter-spacing:-0.435px;left:697.52px;">Search Downloads</div>
<div class="t" style="top:153.94px;font-size:12px;color:#ffffff;letter-spacing:0.181px;left:53.52px;">Home</div>
<div class="t" style="top:215.44px;font-size:12px;color:#ffffff;letter-spacing:-0.379px;left:53.52px;">Desktop</div>
<div class="t" style="top:246.24px;font-size:12px;color:#ffffff;letter-spacing:-0.227px;left:53.52px;">Downloads</div>
<div class="t" style="top:277.04px;font-size:12px;color:#ffffff;letter-spacing:-0.155px;left:53.52px;">Documents</div>
<div class="t" style="top:307.84px;font-size:12px;color:#ffffff;letter-spacing:0.029px;left:53.52px;">Music</div>
<div class="t" style="top:338.64px;font-size:12px;color:#ffffff;letter-spacing:-0.357px;left:53.52px;">Pictures</div>
<div class="t" style="top:369.44px;font-size:12px;color:#ffffff;letter-spacing:-0.365px;left:53.52px;">Videos</div>
<div class="t" style="top:400.24px;font-size:12px;color:#ffffff;letter-spacing:-0.392px;left:53.52px;">Google Drive (G:)</div>
<div class="t" style="top:461.54px;font-size:12px;color:#ffffff;letter-spacing:-0.738px;left:53.52px;">This PC</div>
<div class="t" style="top:492.34px;font-size:12px;color:#ffffff;letter-spacing:-0.386px;left:53.52px;">CD Drive (F:) MobileWiFi</div>
<div class="t" style="top:523.14px;font-size:12px;color:#ffffff;letter-spacing:-0.756px;left:53.52px;">USB Drive (E:)</div>
<div class="t" style="top:553.94px;font-size:12px;color:#ffffff;letter-spacing:0.041px;left:53.52px;">Network</div>
<div class="t" style="top:151.24px;font-size:12px;color:#dcdcdc;letter-spacing:0.115px;left:251.12px;">Name</div>
<div class="t" style="top:150.84px;font-size:12px;color:#dcdcdc;letter-spacing:-0.141px;left:490.32px;">Date modified</div>
<div class="t" style="top:151.24px;font-size:12px;color:#dcdcdc;letter-spacing:-0.352px;left:628.27px;">Type</div>
<div class="t" style="top:151.24px;font-size:12px;color:#dcdcdc;letter-spacing:-0.795px;left:743.27px;">Size</div>
<div class="t" style="top:178.98px;font-size:15.5px;color:#ececec;letter-spacing:-0.484px;left:242.98px;">Today</div>
<div class="t" style="top:208.94px;font-size:12px;color:#ffffff;letter-spacing:-0.289px;left:259.22px;">rufus-3.21.exe</div>
<div class="t" style="top:208.94px;font-size:12px;color:#e0e0e0;letter-spacing:-0.558px;left:489.92px;">20.11.2022 14:15</div>
<div class="t" style="top:208.59px;font-size:12px;color:#e0e0e0;letter-spacing:0.049px;left:628.27px;">Application</div>
<div class="t" style="top:208.59px;font-size:12px;color:#e0e0e0;letter-spacing:-0.916px;right:192.60px;">1.365 KB</div>
<div class="t" style="top:271.15px;font-size:14px;color:#ffffff;z-index:20;letter-spacing:-0.410px;left:356.24px;">Open</div>
<div class="t" style="top:301.85px;font-size:14px;color:#ffffff;z-index:20;letter-spacing:-0.282px;left:356.24px;">Run as administrator</div>
<div class="t" style="top:332.55px;font-size:14px;color:#ffffff;z-index:20;letter-spacing:-0.259px;left:356.24px;">Pin to Start</div>
<div class="t" style="top:363.25px;font-size:14px;color:#ffffff;z-index:20;letter-spacing:-0.294px;left:356.24px;">Add to Favorites</div>
<div class="t" style="top:393.95px;font-size:14px;color:#ffffff;z-index:20;letter-spacing:-0.344px;left:356.24px;">Compress to ZIP file</div>
<div class="t" style="top:424.65px;font-size:14px;color:#ffffff;z-index:20;letter-spacing:-0.335px;left:356.24px;">Copy as path</div>
<div class="t" style="top:455.35px;font-size:14px;color:#ffffff;z-index:20;letter-spacing:-0.277px;left:356.24px;">Properties</div>
<div class="t" style="top:495.25px;font-size:14px;color:#ffffff;z-index:20;letter-spacing:-0.239px;left:356.24px;">Show more options</div>
<div class="t" style="top:272.84px;font-size:12px;color:#cfcfcf;z-index:20;letter-spacing:-0.407px;left:514.42px;">Enter</div>
<div class="t" style="top:426.94px;font-size:12px;color:#cfcfcf;z-index:20;letter-spacing:0.046px;left:513.82px;">Ctrl+Shift+C</div>
<div class="t" style="top:458.14px;font-size:12px;color:#cfcfcf;z-index:20;letter-spacing:0.045px;left:513.82px;">Alt+Enter</div>
<div class="t" style="top:497.34px;font-size:12px;color:#cfcfcf;z-index:20;letter-spacing:-0.330px;left:513.82px;">Shift+F10</div>
<div class="t" style="top:668.44px;font-size:12px;color:#e6e6e6;letter-spacing:-0.345px;left:14.52px;">1 item</div>
<div class="t" style="top:668.44px;font-size:12px;color:#e6e6e6;left:55.52px;">|</div>
<div class="t" style="top:668.44px;font-size:12px;color:#e6e6e6;letter-spacing:-0.404px;left:66.22px;">1 item selected</div>
<div class="t" style="top:668.44px;font-size:12px;color:#e6e6e6;letter-spacing:-0.707px;left:148.02px;">1,33 MB</div>
<div class="t" style="top:668.44px;font-size:12px;color:#e6e6e6;left:197.52px;">|</div>
<div class="abs" style="left:0;top:0;width:1000px;height:686px;box-sizing:border-box;border:1px solid #3a3d44;border-bottom-color:#3a3b42;border-radius:8px;z-index:30;"></div>
</div>
</body></html>
